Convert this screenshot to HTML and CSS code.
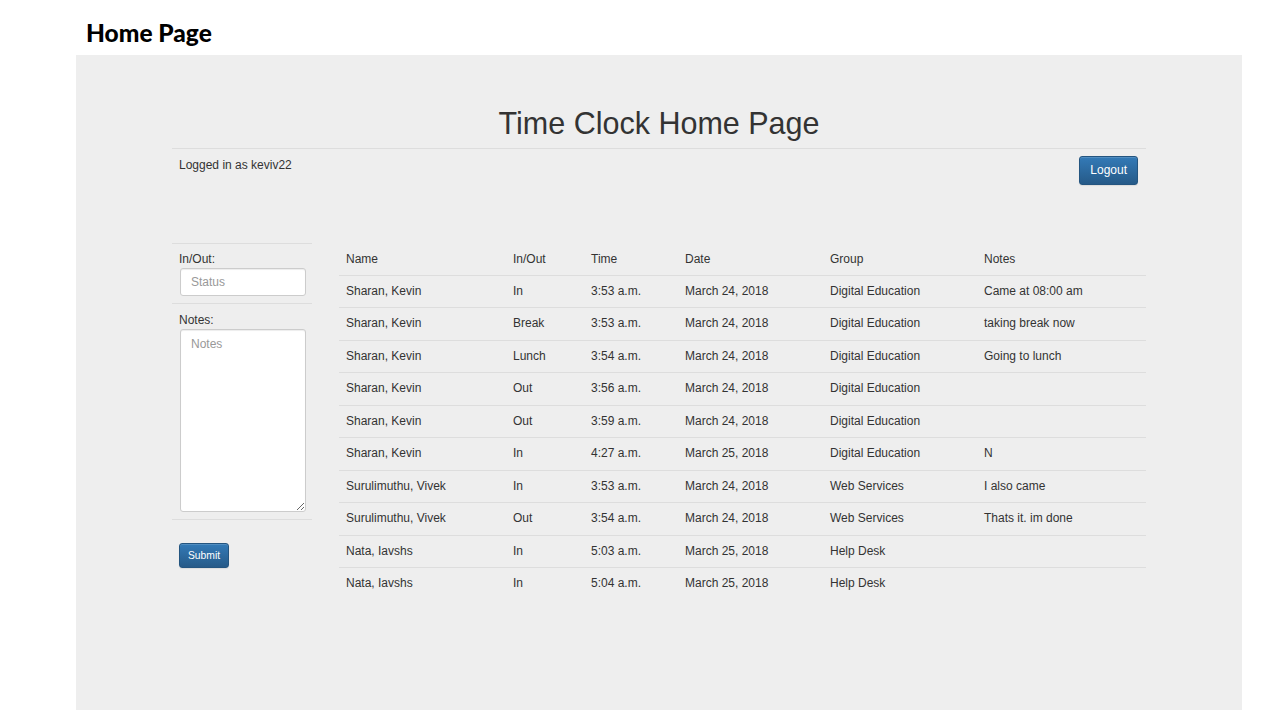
FILE: index.html
```html
<!DOCTYPE html>
<html lang="en">
<head>
  <meta charset="UTF-8" />
  <title>Time Clock Home Page</title>
  <link rel="stylesheet" href="styles.css">
</head>
<body>
  <div class="slide-title">Home Page</div>

  <div class="panel">
    <div class="container">
      <h1>Time Clock Home Page</h1>

      <div class="user-bar">
        <span>Logged in as keviv22</span>
        <button class="btn btn-logout" type="button">Logout</button>
      </div>

      <div class="main">
        <form class="clock-form">
          <div class="form-group">
            <label for="status">In/Out:</label>
            <input type="text" id="status" placeholder="Status" />
          </div>
          <div class="form-group notes-group">
            <label for="notes">Notes:</label>
            <textarea id="notes" placeholder="Notes"></textarea>
          </div>
          <div class="form-end">
            <button class="btn btn-submit" type="submit">Submit</button>
          </div>
        </form>

        <table class="punch-table">
          <colgroup>
            <col class="c-name"><col class="c-inout"><col class="c-time">
            <col class="c-date"><col class="c-group"><col class="c-notes">
          </colgroup>
          <thead>
            <tr><th>Name</th><th>In/Out</th><th>Time</th><th>Date</th><th>Group</th><th>Notes</th></tr>
          </thead>
          <tbody>
            <tr><td>Sharan, Kevin</td><td>In</td><td>3:53 a.m.</td><td>March 24, 2018</td><td>Digital Education</td><td>Came at 08:00 am</td></tr>
            <tr><td>Sharan, Kevin</td><td>Break</td><td>3:53 a.m.</td><td>March 24, 2018</td><td>Digital Education</td><td>taking break now</td></tr>
            <tr><td>Sharan, Kevin</td><td>Lunch</td><td>3:54 a.m.</td><td>March 24, 2018</td><td>Digital Education</td><td>Going to lunch</td></tr>
            <tr><td>Sharan, Kevin</td><td>Out</td><td>3:56 a.m.</td><td>March 24, 2018</td><td>Digital Education</td><td></td></tr>
            <tr><td>Sharan, Kevin</td><td>Out</td><td>3:59 a.m.</td><td>March 24, 2018</td><td>Digital Education</td><td></td></tr>
            <tr><td>Sharan, Kevin</td><td>In</td><td>4:27 a.m.</td><td>March 25, 2018</td><td>Digital Education</td><td>N</td></tr>
            <tr><td>Surulimuthu, Vivek</td><td>In</td><td>3:53 a.m.</td><td>March 24, 2018</td><td>Web Services</td><td>I also came</td></tr>
            <tr><td>Surulimuthu, Vivek</td><td>Out</td><td>3:54 a.m.</td><td>March 24, 2018</td><td>Web Services</td><td>Thats it. im done</td></tr>
            <tr><td>Nata, Iavshs</td><td>In</td><td>5:03 a.m.</td><td>March 25, 2018</td><td>Help Desk</td><td></td></tr>
            <tr><td>Nata, Iavshs</td><td>In</td><td>5:04 a.m.</td><td>March 25, 2018</td><td>Help Desk</td><td></td></tr>
          </tbody>
        </table>
      </div>
    </div>
  </div>
</body>
</html>
```

FILE: styles.css
```css
* { box-sizing: border-box; }

html, body {
  margin: 0;
  padding: 0;
  background: #fff;
  font-family: 'Liberation Sans', Arial, sans-serif;
  color: #333;
}

.slide-title {
  height: 55px;
  padding: 18px 0 0 86px;
  font-family: 'Lato', sans-serif;
  font-weight: 900;
  font-size: 24.5px;
  line-height: 30px;
  color: #000;
}

.panel {
  margin-left: 76px;
  width: 1166px;
  height: 655px;
  background: #eee;
  overflow: hidden;
}

.container {
  width: 974px;
  margin: 0 auto;
}

h1 {
  margin: 51px 0 8px;
  font-size: 30.5px;
  font-weight: normal;
  line-height: 34px;
  text-align: center;
  color: #333;
}

.user-bar {
  display: flex;
  justify-content: space-between;
  align-items: flex-start;
  height: 95px;
  padding: 7px 8px 0 7px;
  border-top: 1px solid #ddd;
  font-size: 12px;
  line-height: 17px;
}

.user-bar span { margin-top: 1px; }

.btn {
  font-family: 'Liberation Sans', Arial, sans-serif;
  color: #fff;
  background: linear-gradient(#337ab7, #265a88);
  border: 1px solid #245580;
  border-radius: 3px;
  box-shadow: inset 0 1px 0 rgba(255,255,255,.15), 0 1px 1px rgba(0,0,0,.08);
  cursor: pointer;
}

.btn-logout {
  padding: 5px 10px;
  font-size: 12px;
  line-height: 17px;
}

.btn-submit {
  padding: 4px 8px;
  font-size: 10.3px;
  line-height: 15px;
}

.main {
  display: flex;
  gap: 27px;
}

.clock-form {
  width: 140px;
  flex: none;
}

.form-group {
  border-top: 1px solid #ddd;
  padding: 7px 6px 7px 7px;
}

.form-group label {
  display: block;
  font-size: 12px;
  line-height: 17px;
  margin-bottom: 0;
}

.notes-group { padding-top: 8px; }

.form-group input,
.form-group textarea {
  display: block;
  width: 126px;
  margin-left: 1px;
  padding: 5px 10px;
  font-family: 'Liberation Sans', Arial, sans-serif;
  font-size: 12px;
  color: #555;
  background: #fff;
  border: 1px solid #ccc;
  border-radius: 3px;
  box-shadow: inset 0 1px 1px rgba(0,0,0,.075);
  outline: none;
}

.form-group input { height: 28px; }

.form-group textarea {
  height: 183px;
  padding-top: 7px;
}

::placeholder { color: #999; }

.form-end {
  border-top: 1px solid #ddd;
  padding: 23px 7px;
}

.punch-table {
  width: 807px;
  border-collapse: collapse;
  font-size: 12px;
  table-layout: fixed;
}

.c-name { width: 167px; }
.c-inout { width: 78px; }
.c-time { width: 94px; }
.c-date { width: 145px; }
.c-group { width: 154px; }
.c-notes { width: 169px; }

.punch-table th,
.punch-table td {
  padding: 7px;
  line-height: 17.5px;
  text-align: left;
  font-weight: normal;
  white-space: nowrap;
}

.punch-table th {
  padding: 8px 7px 6px;
  border-bottom: 1px solid #ddd;
}

.punch-table td {
  border-top: 1px solid #ddd;
}
```
